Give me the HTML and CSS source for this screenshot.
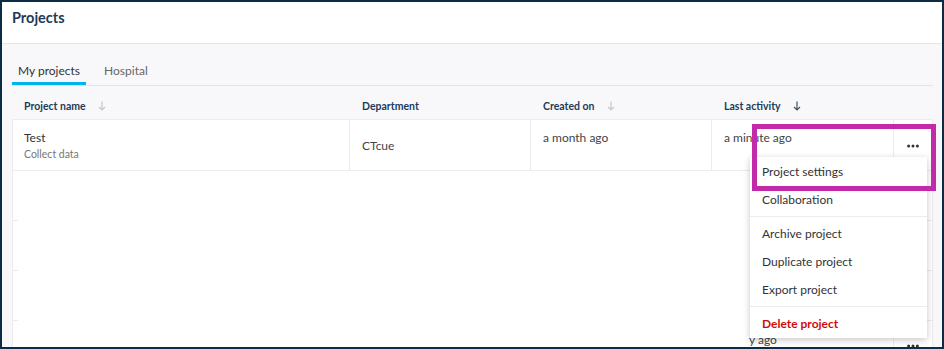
FILE: index.html
```html
<!DOCTYPE html>
<html lang="en">
<head>
  <meta charset="UTF-8">
  <title>Projects</title>
  <link rel="stylesheet" href="styles.css">
</head>
<body>
  <div class="app">
    <header class="page-header">
      <h1>Projects</h1>
    </header>
    <main class="content">
      <nav class="tabs">
        <span class="tab active">My projects</span>
        <span class="tab">Hospital</span>
      </nav>
      <div class="table">
        <div class="row thead">
          <div class="cell first">Project name
            <svg class="sort" width="8" height="10" viewBox="0 0 8 10"><path d="M4 0.5V9M1 6l3 3 3-3"/></svg>
          </div>
          <div class="cell">Department</div>
          <div class="cell">Created on
            <svg class="sort" width="8" height="10" viewBox="0 0 8 10"><path d="M4 0.5V9M1 6l3 3 3-3"/></svg>
          </div>
          <div class="cell">Last activity
            <svg class="sort active" width="8" height="10" viewBox="0 0 8 10"><path d="M4 0.5V9M1 6l3 3 3-3"/></svg>
          </div>
          <div class="cell"></div>
        </div>
        <div class="tbody">
          <div class="row">
            <div class="cell first">
              <div class="name">Test</div>
              <div class="sub">Collect data</div>
            </div>
            <div class="cell middle">CTcue</div>
            <div class="cell">a month ago</div>
            <div class="cell">a minute ago</div>
            <div class="cell middle actions">
              <svg width="12" height="4" viewBox="0 0 12 4"><circle cx="1.6" cy="2" r="1.5"/><circle cx="6" cy="2" r="1.5"/><circle cx="10.4" cy="2" r="1.5"/></svg>
              <!-- menu opened on the first row -->
              <ul class="menu">
                <li>Project settings</li>
                <li>Collaboration</li>
                <li class="sep"></li>
                <li>Archive project</li>
                <li>Duplicate project</li>
                <li>Export project</li>
                <li class="sep"></li>
                <li class="danger">Delete project</li>
              </ul>
            </div>
          </div>
          <div class="row masked">
            <div class="cell blank"></div>
            <div class="cell actions"></div>
          </div>
          <div class="row masked">
            <div class="cell blank"></div>
            <div class="cell actions"></div>
          </div>
          <div class="row masked">
            <div class="cell blank"></div>
            <div class="cell actions"></div>
          </div>
          <div class="row masked">
            <div class="cell blank"><span class="peek">y ago</span></div>
            <div class="cell middle actions">
              <svg width="12" height="4" viewBox="0 0 12 4"><circle cx="1.6" cy="2" r="1.5"/><circle cx="6" cy="2" r="1.5"/><circle cx="10.4" cy="2" r="1.5"/></svg>
            </div>
          </div>
        </div>
      </div>
    </main>
    <div class="highlight"></div>
  </div>
</body>
</html>
```

FILE: styles.css
```css
* {
  margin: 0;
  padding: 0;
  box-sizing: border-box;
}
body {
  background: #0c2c45;
  padding: 2px;
  font-family: 'Lato', 'Open Sans', sans-serif;
  font-size: 12px;
  color: #333;
}
.app {
  position: relative;
  height: 345px;
  background: #f8f8fa;
  overflow: hidden;
}
.page-header {
  height: 42px;
  background: #fff;
  border-bottom: 1px solid #e6e6ea;
  padding: 6px 10px 0;
}
h1 {
  font-size: 14.5px;
  font-weight: 700;
  line-height: 20px;
  color: #1c3b5a;
}
.content {
  padding: 0 9px 0 10px;
}
.tabs {
  display: flex;
  gap: 12px;
  margin-top: 17px;
  border-bottom: 1px solid #e4e4e8;
}
.tab {
  padding: 0 6px 1px;
  line-height: 20px;
  font-size: 12px;
  color: #666;
  border-bottom: 3px solid transparent;
}
.tab.active {
  color: #333;
  border-color: #00b3ef;
}
.row {
  display: grid;
  grid-template-columns: 336px 181px 181px 182px 1fr;
}
.thead {
  border: 1px solid transparent;
  border-top: none;
  border-bottom: none;
}
.thead .cell {
  display: flex;
  align-items: center;
  gap: 12px;
  padding: 12px 12px 5px;
  font-size: 10.5px;
  font-weight: 700;
  line-height: 16px;
  color: #1f3b57;
  border-left: 1px solid transparent;
}
.thead .cell.first {
  border-left: none;
  padding-left: 11px;
}
.sort path {
  fill: none;
  stroke: #c6c8cd;
  stroke-width: 1.2;
}
.sort.active path {
  stroke: #46525e;
}
.tbody {
  background: #fff;
  border: 1px solid #ececef;
  border-bottom: none;
  height: 300px;
}
.tbody .row {
  height: 51px;
  border-bottom: 1px solid #ececef;
}
.tbody .cell {
  padding: 9px 12px;
  font-size: 12px;
  line-height: 17px;
  color: #444;
}
.tbody .cell + .cell {
  border-left: 1px solid #ececef;
}
.tbody .cell.first {
  padding-left: 11px;
}
.name {
  color: #333;
}
.sub {
  font-size: 10.5px;
  line-height: 16px;
  color: #777;
}
.middle {
  display: flex;
  align-items: center;
}
.actions {
  position: relative;
  justify-content: center;
}
.actions circle {
  fill: #333;
}
.tbody .row.masked {
  height: 50px;
  border-bottom: none;
}
.masked .blank {
  grid-column: 1 / 5;
  background: linear-gradient(#ececef, #ececef) left bottom / 5px 1px no-repeat;
}
.masked .actions {
  box-shadow: inset 0 -1px 0 #ececef;
}
.peek {
  display: block;
  margin: 1px 0 0 724px;
  color: #444;
}
.menu {
  position: absolute;
  left: -144px;
  top: 37px;
  width: 177px;
  list-style: none;
  background: #fff;
  padding-top: 1px;
  box-shadow: 0 2px 7px rgba(0, 0, 0, 0.22);
  z-index: 2;
}
.menu li {
  height: 28px;
  line-height: 28px;
  padding: 0 12px;
  font-size: 12px;
  color: #333;
}
.menu li.sep {
  height: 0;
  margin: 2px 0 3px;
  border-top: 1px solid #ececef;
}
.menu li.danger {
  color: #d10a0a;
  font-weight: 700;
}
.highlight {
  position: absolute;
  left: 750px;
  top: 122px;
  width: 184px;
  height: 67px;
  border: 5px solid #c22aa9;
  z-index: 3;
}
```
